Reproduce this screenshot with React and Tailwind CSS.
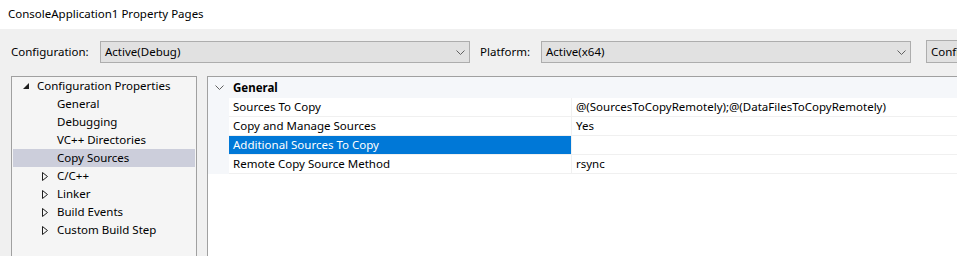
import React from "react";

const font = { fontFamily: '"Segoe UI", "Noto Sans", "Open Sans", sans-serif' };

function Chevron() {
  return (
    <svg width="9" height="5" viewBox="0 0 9 5">
      <path d="M0.5 0.5 L4.5 4.5 L8.5 0.5" fill="none" stroke="#606060" strokeWidth="1" />
    </svg>
  );
}

function Dropdown({ value }) {
  return (
    <div className="w-[370px] h-[22px] shrink-0 border border-[#adadad] bg-[#e1e1e1] flex items-center justify-between pl-[4px] pr-[4px]">
      <span className="text-black leading-none">{value}</span>
      <Chevron />
    </div>
  );
}

function ExpandedTri() {
  return (
    <svg width="6" height="6" viewBox="0 0 6 6">
      <polygon points="6,0 6,6 0,6" fill="#1e1e1e" />
    </svg>
  );
}

function CollapsedTri() {
  return (
    <svg width="6" height="9" viewBox="0 0 6 9">
      <polygon points="0.5,0.5 5.5,4.5 0.5,8.5" fill="none" stroke="#1e1e1e" strokeWidth="1" />
    </svg>
  );
}

const tree = [
  { label: "Configuration Properties", level: 0, icon: "exp" },
  { label: "General", level: 1 },
  { label: "Debugging", level: 1 },
  { label: "VC++ Directories", level: 1 },
  { label: "Copy Sources", level: 1, selected: true },
  { label: "C/C++", level: 1, icon: "col" },
  { label: "Linker", level: 1, icon: "col" },
  { label: "Build Events", level: 1, icon: "col" },
  { label: "Custom Build Step", level: 1, icon: "col" },
];

const rows = [
  { name: "Sources To Copy", value: "@(SourcesToCopyRemotely);@(DataFilesToCopyRemotely)" },
  { name: "Copy and Manage Sources", value: "Yes" },
  { name: "Additional Sources To Copy", value: "", selected: true },
  { name: "Remote Copy Source Method", value: "rsync" },
];

export default function App() {
  return (
    <div className="w-[957px] h-[256px] overflow-hidden bg-[#f0f0f0] text-black text-[11.5px]" style={font}>
      <div className="h-[29px] bg-white flex items-center pl-[8px] pb-[1px]">
        <span>ConsoleApplication1 Property Pages</span>
      </div>
      <div className="h-[47px] pt-[12px] flex items-start overflow-hidden">
        <div className="w-[100px] h-[22px] pl-[11px] flex items-center shrink-0">Configuration:</div>
        <Dropdown value="Active(Debug)" />
        <div className="w-[71px] h-[22px] pl-[10px] flex items-center shrink-0">Platform:</div>
        <Dropdown value="Active(x64)" />
        <div className="ml-[15px] mt-[-1px] h-[23px] w-[80px] shrink-0 border border-[#adadad] bg-[#e1e1e1] flex items-center pl-[4px] whitespace-nowrap overflow-hidden">
          Configuration Manager...
        </div>
      </div>
      <div className="flex pl-[11px] gap-[10px]">
        <div className="w-[186px] h-[200px] border border-[#a0a0a0] bg-[#f5f5f5] px-[1px] shrink-0">
          {tree.map((t) => (
            <div
              key={t.label}
              className={`h-[18px] flex items-center ${t.selected ? "bg-[#cccedb]" : ""}`}
            >
              <div className={`${t.level === 0 ? "w-[24px] pl-[10px]" : "w-[44px] pl-[29px]"} flex items-center shrink-0`}>
                {t.icon === "exp" && <ExpandedTri />}
                {t.icon === "col" && <CollapsedTri />}
              </div>
              <span className="whitespace-nowrap">{t.label}</span>
            </div>
          ))}
        </div>
        <div className="flex-1 h-[200px] border border-[#a0a0a0] border-r-0 bg-white overflow-hidden">
          <div className="h-[21px] bg-[#f5f7fa] flex items-center">
            <div className="w-[21px] flex justify-center pl-[1px]">
              <Chevron />
            </div>
            <span className="pl-[4px] font-bold">General</span>
          </div>
          {rows.map((r) => (
            <div key={r.name} className="flex h-[19px]">
              <div className="w-[21px] bg-[#f5f7fa] shrink-0" />
              <div
                className={`w-[343px] shrink-0 border-b border-r border-[#f0f0f0] flex items-center pl-[4px] ${
                  r.selected ? "bg-[#0078d7] text-white" : ""
                }`}
              >
                {r.name}
              </div>
              <div className="flex-1 border-b border-[#f0f0f0] flex items-center pl-[4px] whitespace-nowrap">
                {r.value}
              </div>
            </div>
          ))}
        </div>
      </div>
    </div>
  );
}
